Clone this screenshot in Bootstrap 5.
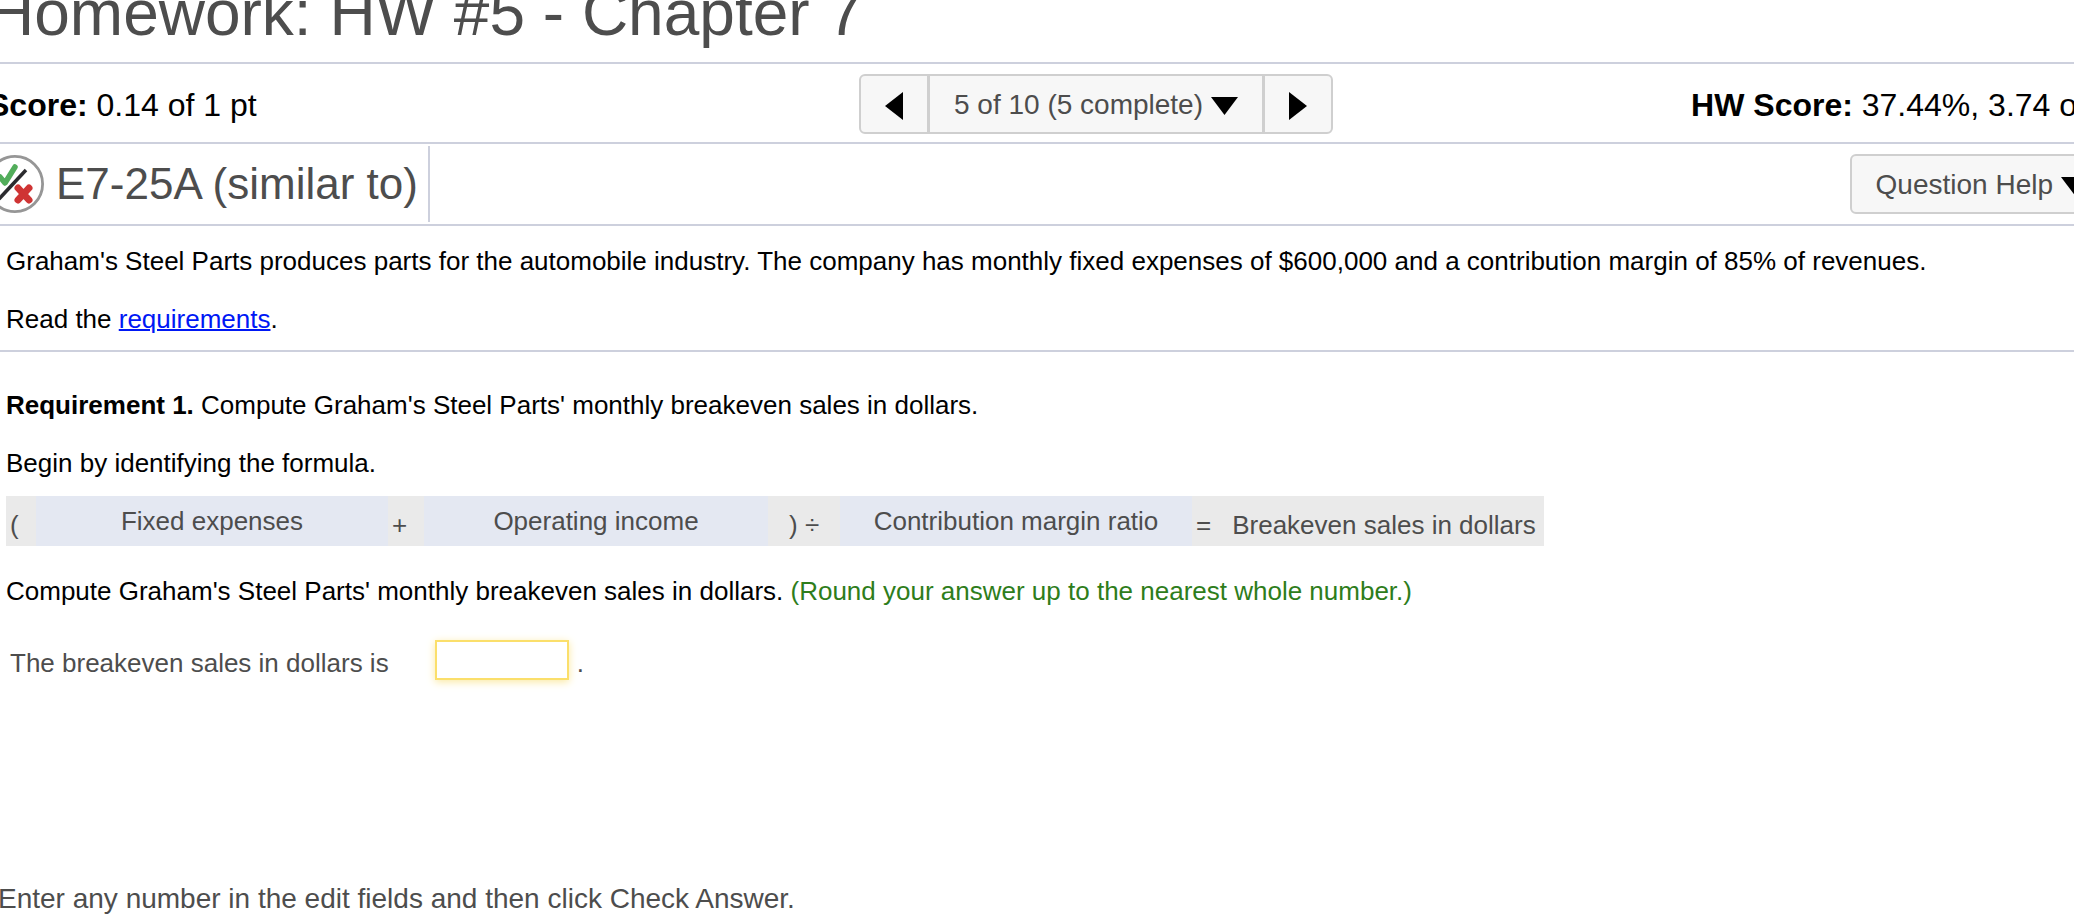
<!DOCTYPE html>
<html lang="en">
<head>
<meta charset="utf-8">
<meta name="viewport" content="width=device-width, initial-scale=1">
<title>Homework: HW #5 - Chapter 7</title>
<link rel="stylesheet" href="https://cdn.jsdelivr.net/npm/bootstrap@5.3.0/dist/css/bootstrap.min.css">
<style>
  body { font-family: "Liberation Sans", Arial, sans-serif; font-size: 26px; line-height: 30px; color: #000; overflow: hidden; }
  .page-head { margin-left: -12px; margin-right: -130px; }
  .rule-below { border-bottom: 2px solid #cdd0dd; }
  .ink { color: #4d4d4d; }
  .page-title { font-size: 64px; line-height: 74px; margin-top: -24px; padding-bottom: 12px; }
  .score-bar { display: grid; grid-template-columns: 1fr auto 1fr; height: 80px; padding-top: 2px; }
  .score { font-size: 32px; line-height: 36px; padding-top: 2px; }
  .hw-score { padding-right: 22px; }
  .btn-tool { --bs-btn-bg: #f7f7f7; --bs-btn-border-color: #cfcfcf; --bs-btn-color: #4d4d4d; --bs-btn-hover-bg: #eee; --bs-btn-hover-color: #4d4d4d; --bs-btn-hover-border-color: #cfcfcf;
    --bs-btn-font-size: 28px; --bs-btn-line-height: 32px; --bs-btn-padding-x: 24px; --bs-btn-padding-y: 12px; --bs-btn-border-width: 2px; --bs-btn-border-radius: 6px; padding-top: 13px; padding-bottom: 11px; }
  .btn-tool svg { fill: #000; margin-top: 2px; }
  .btn-group > .btn-tool:not(:first-child) { margin-left: -2px; }
  .question-bar { height: 82px; }
  .question-name { font-size: 44px; line-height: 50px; margin-left: -2px; padding-right: 10px; gap: 12px; height: 76px; border-right: 2px solid #cdd0dd; }
  .question-help { margin-right: 90px; }
  .prompt { padding: 20px 6px 16px; }
  .work { padding: 38px 6px 0; }
  .para { margin-bottom: 28px; }
  .req-link { color: #0018f5; text-decoration-thickness: 2px; }
  .formula { width: auto; margin: -10px 0 30px; border-spacing: 0; }
  .formula td { background: #eaeaea; height: 50px; padding: 8px 0 0 4px; vertical-align: middle; white-space: nowrap; }
  .formula td.term { background: #e4e8f2; padding: 0; text-align: center; }
  .w-open { width: 30px; } .w-term { width: 352px; } .w-mid { width: 344px; } .w-plus { width: 36px; } .w-close { width: 72px; } .w-result { width: 352px; }
  .formula td.w-close { padding-left: 21px; }
  .eq { margin-right: 21px; }
  .hint { color: #2e7d1b; }
  .answer { margin-top: 34px; padding-left: 4px; }
  .answer label, .answer span { margin-bottom: 2px; }
  .answer-box { width: 134px; height: 40px; margin: 0 8px 0 46px; border: 2px solid #fbdf6b; border-radius: 0; padding: 0 6px; box-shadow: 0 2px 8px #fbe9a0; }
  .foot-note { font-size: 28px; line-height: 34px; margin: 202px 0 0 -2px; }
</style>
</head>
<body>
<header class="page-head">
  <h1 class="page-title rule-below ink fw-normal mb-0">Homework: HW #5 - Chapter 7</h1>
  <div class="score-bar rule-below align-items-center">
    <div class="score"><b>Score:</b> 0.14 of 1 pt</div>
    <div class="btn-group" role="group" aria-label="Question navigation">
      <button type="button" class="btn btn-tool" aria-label="Previous question"><svg class="d-block" width="18" height="28" viewBox="0 0 18 28"><path d="M18 0v28L0 14z"/></svg></button>
      <button type="button" class="btn btn-tool d-flex align-items-center gap-2">5 of 10 (5 complete)<svg width="27" height="18" viewBox="0 0 27 18"><path d="M0 0h27L13.500 18z"/></svg></button>
      <button type="button" class="btn btn-tool" aria-label="Next question"><svg class="d-block" width="18" height="28" viewBox="0 0 18 28"><path d="M0 0v28l18-14z"/></svg></button>
    </div>
    <div class="score hw-score text-end text-nowrap"><b>HW Score:</b> 37.44%, 3.74 of 10 pts</div>
  </div>
  <div class="question-bar rule-below d-flex align-items-center justify-content-between">
    <h2 class="question-name ink fw-normal mb-0 d-flex align-items-center">
      <svg width="58" height="58" viewBox="0 0 58 58" fill="none" aria-hidden="true">
        <circle cx="29" cy="29" r="27.600" fill="#fff" stroke="#969696" stroke-width="2.800"/>
        <path d="M13 44L40 15" stroke="#2b2b2f" stroke-width="3.500"/>
        <path d="M14 22l5 6L29 12" stroke="#52ad5b" stroke-width="5.500" stroke-linecap="round" stroke-linejoin="round"/>
        <path d="M32 33l11 12M43 33l-11 12" stroke="#cf3434" stroke-width="7" stroke-linecap="round"/>
      </svg>E7-25A (similar to)
    </h2>
    <button type="button" class="btn btn-tool question-help d-flex align-items-center gap-2">Question Help<svg width="27" height="18" viewBox="0 0 27 18"><path d="M0 0h27L13.500 18z"/></svg></button>
  </div>
</header>
<main>
  <section class="prompt rule-below">
    <p class="para">Graham's Steel Parts produces parts for the automobile industry. The company has monthly fixed expenses of $600,000 and a contribution margin of 85% of revenues.</p>
    <p class="mb-0">Read the <a class="req-link" href="#requirements">requirements</a>.</p>
  </section>
  <section class="work">
    <p class="para"><b>Requirement 1.</b> Compute Graham's Steel Parts' monthly breakeven sales in dollars.</p>
    <p class="para">Begin by identifying the formula.</p>
    <table class="formula ink">
      <tr>
        <td class="w-open">(</td>
        <td class="term w-term">Fixed expenses</td>
        <td class="w-plus">+</td>
        <td class="term w-mid">Operating income</td>
        <td class="w-close">) ÷</td>
        <td class="term w-term">Contribution margin ratio</td>
        <td class="w-result"><span class="eq">=</span>Breakeven sales in dollars</td>
      </tr>
    </table>
    <p class="mb-0">Compute Graham's Steel Parts' monthly breakeven sales in dollars. <span class="hint">(Round your answer up to the nearest whole number.)</span></p>
    <div class="answer ink d-flex align-items-end">
      <label for="breakeven">The breakeven sales in dollars is</label>
      <input id="breakeven" type="text" class="answer-box">
      <span>.</span>
    </div>
  </section>
</main>
<footer class="foot-note ink">Enter any number in the edit fields and then click Check Answer.</footer>
<script src="https://cdn.jsdelivr.net/npm/bootstrap@5.3.0/dist/js/bootstrap.bundle.min.js"></script>
</body>
</html>
